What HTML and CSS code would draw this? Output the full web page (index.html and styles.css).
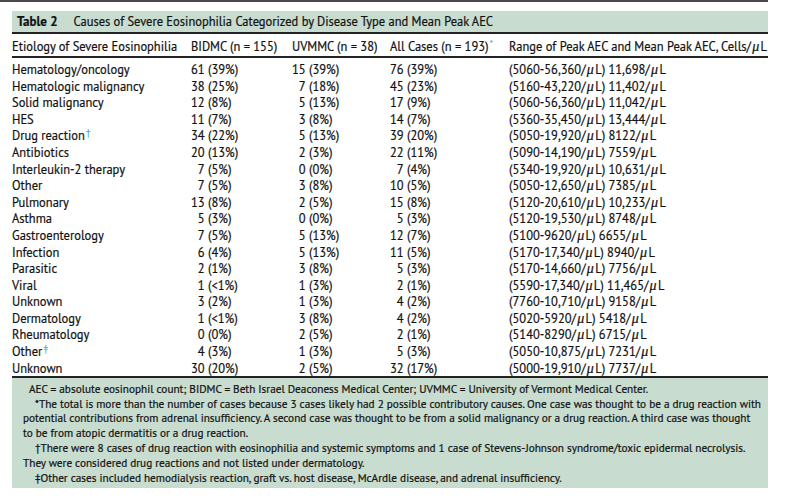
FILE: index.html
```html
<!DOCTYPE html>
<html lang="en">
<head>
<meta charset="utf-8">
<title>Table 2</title>
<link rel="stylesheet" href="styles.css">
</head>
<body>
<div class="topline"></div>
<div class="table">
  <div class="title"><b class="label">Table 2</b>Causes of Severe Eosinophilia Categorized by Disease Type and Mean Peak AEC</div>
  <div class="row head">
    <div>Etiology of Severe Eosinophilia</div>
    <div>BIDMC (n = 155)</div>
    <div>UVMMC (n = 38)</div>
    <div>All Cases (n = 193)<sup class="mark">*</sup></div>
    <div>Range of Peak AEC and Mean Peak AEC, Cells/<i class="mu">μ</i>L</div>
  </div>
  <div class="body">
    <div class="row"><div>Hematology/oncology</div><div><span class="n">61</span> (39%)</div><div><span class="n">15</span> (39%)</div><div><span class="n">76</span> (39%)</div><div>(5060-56,360/<i class="mu">μ</i>L) 11,698/<i class="mu">μ</i>L</div></div>
    <div class="row"><div>Hematologic malignancy</div><div><span class="n">38</span> (25%)</div><div><span class="n">7</span> (18%)</div><div><span class="n">45</span> (23%)</div><div>(5160-43,220/<i class="mu">μ</i>L) 11,402/<i class="mu">μ</i>L</div></div>
    <div class="row"><div>Solid malignancy</div><div><span class="n">12</span> (8%)</div><div><span class="n">5</span> (13%)</div><div><span class="n">17</span> (9%)</div><div>(5060-56,360/<i class="mu">μ</i>L) 11,042/<i class="mu">μ</i>L</div></div>
    <div class="row"><div>HES</div><div><span class="n">11</span> (7%)</div><div><span class="n">3</span> (8%)</div><div><span class="n">14</span> (7%)</div><div>(5360-35,450/<i class="mu">μ</i>L) 13,444/<i class="mu">μ</i>L</div></div>
    <div class="row"><div>Drug reaction<sup class="mark">†</sup></div><div><span class="n">34</span> (22%)</div><div><span class="n">5</span> (13%)</div><div><span class="n">39</span> (20%)</div><div>(5050-19,920/<i class="mu">μ</i>L) 8122/<i class="mu">μ</i>L</div></div>
    <div class="row"><div>Antibiotics</div><div><span class="n">20</span> (13%)</div><div><span class="n">2</span> (3%)</div><div><span class="n">22</span> (11%)</div><div>(5090-14,190/<i class="mu">μ</i>L) 7559/<i class="mu">μ</i>L</div></div>
    <div class="row"><div>Interleukin-2 therapy</div><div><span class="n">7</span> (5%)</div><div><span class="n">0</span> (0%)</div><div><span class="n">7</span> (4%)</div><div>(5340-19,920/<i class="mu">μ</i>L) 10,631/<i class="mu">μ</i>L</div></div>
    <div class="row"><div>Other</div><div><span class="n">7</span> (5%)</div><div><span class="n">3</span> (8%)</div><div><span class="n">10</span> (5%)</div><div>(5050-12,650/<i class="mu">μ</i>L) 7385/<i class="mu">μ</i>L</div></div>
    <div class="row"><div>Pulmonary</div><div><span class="n">13</span> (8%)</div><div><span class="n">2</span> (5%)</div><div><span class="n">15</span> (8%)</div><div>(5120-20,610/<i class="mu">μ</i>L) 10,233/<i class="mu">μ</i>L</div></div>
    <div class="row"><div>Asthma</div><div><span class="n">5</span> (3%)</div><div><span class="n">0</span> (0%)</div><div><span class="n">5</span> (3%)</div><div>(5120-19,530/<i class="mu">μ</i>L) 8748/<i class="mu">μ</i>L</div></div>
    <div class="row"><div>Gastroenterology</div><div><span class="n">7</span> (5%)</div><div><span class="n">5</span> (13%)</div><div><span class="n">12</span> (7%)</div><div>(5100-9620/<i class="mu">μ</i>L) 6655/<i class="mu">μ</i>L</div></div>
    <div class="row"><div>Infection</div><div><span class="n">6</span> (4%)</div><div><span class="n">5</span> (13%)</div><div><span class="n">11</span> (5%)</div><div>(5170-17,340/<i class="mu">μ</i>L) 8940/<i class="mu">μ</i>L</div></div>
    <div class="row"><div>Parasitic</div><div><span class="n">2</span> (1%)</div><div><span class="n">3</span> (8%)</div><div><span class="n">5</span> (3%)</div><div>(5170-14,660/<i class="mu">μ</i>L) 7756/<i class="mu">μ</i>L</div></div>
    <div class="row"><div>Viral</div><div><span class="n">1</span> (&lt;1%)</div><div><span class="n">1</span> (3%)</div><div><span class="n">2</span> (1%)</div><div>(5590-17,340/<i class="mu">μ</i>L) 11,465/<i class="mu">μ</i>L</div></div>
    <div class="row"><div>Unknown</div><div><span class="n">3</span> (2%)</div><div><span class="n">1</span> (3%)</div><div><span class="n">4</span> (2%)</div><div>(7760-10,710/<i class="mu">μ</i>L) 9158/<i class="mu">μ</i>L</div></div>
    <div class="row"><div>Dermatology</div><div><span class="n">1</span> (&lt;1%)</div><div><span class="n">3</span> (8%)</div><div><span class="n">4</span> (2%)</div><div>(5020-5920/<i class="mu">μ</i>L) 5418/<i class="mu">μ</i>L</div></div>
    <div class="row"><div>Rheumatology</div><div><span class="n">0</span> (0%)</div><div><span class="n">2</span> (5%)</div><div><span class="n">2</span> (1%)</div><div>(5140-8290/<i class="mu">μ</i>L) 6715/<i class="mu">μ</i>L</div></div>
    <div class="row"><div>Other<sup class="mark">‡</sup></div><div><span class="n">4</span> (3%)</div><div><span class="n">1</span> (3%)</div><div><span class="n">5</span> (3%)</div><div>(5050-10,875/<i class="mu">μ</i>L) 7231/<i class="mu">μ</i>L</div></div>
    <div class="row"><div>Unknown</div><div><span class="n">30</span> (20%)</div><div><span class="n">2</span> (5%)</div><div><span class="n">32</span> (17%)</div><div>(5000-19,910/<i class="mu">μ</i>L) 7737/<i class="mu">μ</i>L</div></div>
  </div>
  <div class="foot">
    <p class="abbr">AEC = absolute eosinophil count; BIDMC = Beth Israel Deaconess Medical Center; UVMMC = University of Vermont Medical Center.</p>
    <p class="fn">*The total is more than the number of cases because 3 cases likely had 2 possible contributory causes. One case was thought to be a drug reaction with<br>potential contributions from adrenal insufficiency. A second case was thought to be from a solid malignancy or a drug reaction. A third case was thought<br>to be from atopic dermatitis or a drug reaction.</p>
    <p class="fn">†There were 8 cases of drug reaction with eosinophilia and systemic symptoms and 1 case of Stevens-Johnson syndrome/toxic epidermal necrolysis.<br>They were considered drug reactions and not listed under dermatology.</p>
    <p class="fn">‡Other cases included hemodialysis reaction, graft vs. host disease, McArdle disease, and adrenal insufficiency.</p>
  </div>
</div>
</body>
</html>
```
FILE: styles.css
```css
html, body {
  margin: 0;
  padding: 0;
  background: #ffffff;
}
body {
  font-family: "PT Sans", "Open Sans", "DejaVu Sans", sans-serif;
  font-size: 12.5px;
  color: #111111;
  -webkit-text-stroke: 0.2px #111111;
}
.topline {
  width: 768px;
  height: 2px;
  background: #4a4a4a;
}
.table {
  margin: 9px 0 0 12px;
  width: 756px;
}
.title {
  background: #c8dccf;
  height: 21.3px;
  line-height: 21.3px;
  padding-left: 5px;
  border-bottom: 2px solid #222;
  white-space: nowrap;
}
.label {
  font-weight: 700;
  font-size: 13px;
  margin-right: 16px;
}
.row {
  display: grid;
  grid-template-columns: 179px 101px 98px 119px 1fr;
  line-height: 16.6px;
  height: 16.6px;
  white-space: nowrap;
}
.head {
  padding: 3.5px 0 1.3px;
  border-bottom: 2px solid #222;
}
.body {
  padding-top: 3.3px;
}
.n {
  display: inline-block;
  width: 2ch;
  text-align: right;
}
.mu {
  font-family: "Liberation Serif", "DejaVu Serif", serif;
  font-style: italic;
  font-size: 1.12em;
  margin: 0 1.4px 0 1.2px;
}
.mark {
  color: #3a9fc7;
  -webkit-text-stroke: 0;
  font-size: 0.8em;
  line-height: 0;
  vertical-align: 0.42em;
  margin-left: 1px;
}
.foot {
  background: #c8dccf;
  border-top: 2px solid #222;
  padding: 3.5px 2px 2.5px 11px;
  font-size: 11.25px;
  line-height: 14.8px;
  white-space: nowrap;
}
.foot p {
  margin: 0;
}
.abbr {
  text-indent: 6px;
}
.fn {
  text-indent: 12px;
}
```
